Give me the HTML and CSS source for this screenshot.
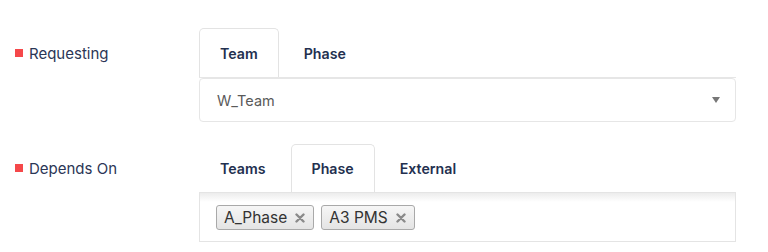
FILE: index.html
```html
<!DOCTYPE html>
<html>
<head>
<meta charset="utf-8">
<link rel="stylesheet" href="styles.css">
</head>
<body>
<div class="form">
  <div class="row row-first">
    <div class="label"><span class="mark"></span>Requesting</div>
    <div class="field">
      <ul class="tabs">
        <li class="tab active">Team</li>
        <li class="tab">Phase</li>
      </ul>
      <div class="select">
        <span class="value">W_Team</span>
        <span class="arrow"></span>
      </div>
    </div>
  </div>
  <div class="row row-second">
    <div class="label"><span class="mark"></span>Depends On</div>
    <div class="field">
      <ul class="tabs tabs-plain">
        <li class="tab">Teams</li>
        <li class="tab active">Phase</li>
        <li class="tab">External</li>
      </ul>
      <div class="multi">
        <span class="chip">A_Phase<svg class="x" viewBox="0 0 10 10" width="10" height="10"><path d="M1.5 1.5 L8.5 8.5 M8.5 1.5 L1.5 8.5"/></svg></span>
        <span class="chip">A3 PMS<svg class="x" viewBox="0 0 10 10" width="10" height="10"><path d="M1.5 1.5 L8.5 8.5 M8.5 1.5 L1.5 8.5"/></svg></span>
      </div>
    </div>
  </div>
</div>
</body>
</html>
```
FILE: styles.css
```css
html, body {
  margin: 0;
  padding: 0;
  background: #fff;
}
body {
  font-family: Inter, "Noto Sans", "Liberation Sans", sans-serif;
  width: 768px;
  height: 252px;
  overflow: hidden;
}
.form {
  padding-top: 28px;
  display: flex;
  flex-direction: column;
  gap: 22px;
}
.row {
  display: flex;
}
.label {
  width: 184px;
  padding-left: 15px;
  display: flex;
  align-items: center;
  height: 50px;
  font-size: 15px;
  color: #2b3656;
}
.row-second .label {
  height: 48px;
}
.mark {
  width: 8px;
  height: 8px;
  background: #f5484a;
  margin-right: 6px;
  flex: none;
}
.field {
  width: 537px;
  display: flex;
  flex-direction: column;
}
.tabs {
  list-style: none;
  margin: 0;
  padding: 0;
  display: flex;
  border-bottom: 1px solid #e6e6e6;
  height: 49px;
}
.tabs-plain {
  border-bottom: none;
  height: 48px;
}
.tab {
  box-sizing: border-box;
  height: 49px;
  padding: 0 20px;
  margin-right: 4px;
  display: flex;
  align-items: center;
  font-size: 14.2px;
  font-weight: 600;
  color: #23304f;
  border: 1px solid transparent;
  border-bottom: none;
  border-radius: 5px 5px 0 0;
}
.tabs-plain .tab {
  height: 48px;
}
.tab.active {
  border-color: #e3e3e3;
  background: #fff;
}
.select {
  box-sizing: border-box;
  height: 44px;
  border: 1px solid #e6e6e6;
  border-radius: 4px;
  display: flex;
  align-items: center;
  justify-content: space-between;
  padding: 0 15px 0 17px;
}
.value {
  font-size: 14.5px;
  color: #5a5a5a;
}
.arrow {
  width: 0;
  height: 0;
  border-left: 4px solid transparent;
  border-right: 4px solid transparent;
  border-top: 6px solid #777;
}
.multi {
  box-sizing: border-box;
  height: 50px;
  border: 1px solid #e4e4e4;
  background: linear-gradient(to bottom, #ececec 0, #fff 9px, #fff 100%);
  display: flex;
  align-items: center;
  gap: 7px;
  padding: 0 16px;
  padding-top: 1px;
}
.chip {
  box-sizing: border-box;
  height: 25px;
  display: inline-flex;
  align-items: center;
  padding: 0 8px 0 7px;
  border: 1px solid #a9a9a9;
  border-radius: 3px;
  background: linear-gradient(to bottom, #f6f6f6, #e4e4e4);
  font-size: 15.5px;
  color: #333;
}
.x {
  margin-left: 8px;
  fill: none;
  stroke: #8a8a8a;
  stroke-width: 2.4;
  stroke-linecap: round;
}
```
